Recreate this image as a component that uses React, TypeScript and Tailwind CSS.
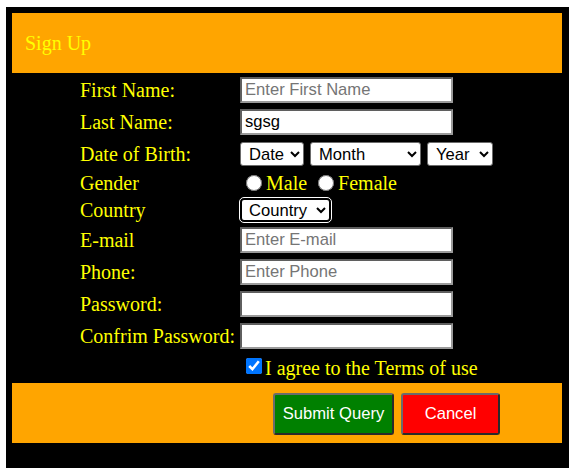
import { useState } from "react";

const serif = "font-['Liberation_Serif','Times_New_Roman',serif]";
const sans = "font-['Liberation_Sans',Arial,sans-serif]";

const inputCls = `w-[213px] h-[26px] bg-white text-black text-[16.6px] ${sans} px-[3px] border-2 border-t-[#5f5f5f] border-l-[#5f5f5f] border-b-[#9a9a9a] border-r-[#9a9a9a] placeholder:text-[#757575] outline-none`;
const selectCls = `h-[24px] bg-white text-black text-[16.6px] ${sans} border border-[#6b6b6b] rounded-[3px] pl-[4px] outline-none`;
const btnCls = `h-[42px] text-white text-[16.6px] ${sans} border-2 border-t-[#6b6b6b] border-l-[#6b6b6b] border-b-[#2a2a2a] border-r-[#2a2a2a] rounded-[3px]`;

function Row({ label, h = "h-[32px]", children }: { label: string; h?: string; children: React.ReactNode }) {
  return (
    <div className={`flex items-center ${h}`}>
      <div className="w-[160px] shrink-0 pl-[68px] box-content">
        <span className="whitespace-nowrap">{label}</span>
      </div>
      <div className="flex items-center">{children}</div>
    </div>
  );
}

export default function App() {
  const [last, setLast] = useState("sgsg");
  const [agree, setAgree] = useState(true);

  return (
    <div className="min-h-screen bg-white pl-[6px] pt-[7px]">
      <div className={`w-[563px] min-h-[470px] bg-black pt-[6px] pl-[6px] pr-[7px] text-[20px] text-[#ffff00] ${serif}`}>
        {/* Header */}
        <div className="h-[60px] bg-[#ffa500] flex items-center pl-[13px]">
          <span>Sign Up</span>
        </div>

        {/* Form rows */}
        <div className="pt-[1px]">
          <Row label="First Name:">
            <input className={inputCls} placeholder="Enter First Name" />
          </Row>
          <Row label="Last Name:">
            <input className={inputCls} value={last} onChange={(e) => setLast(e.target.value)} />
          </Row>
          <Row label="Date of Birth:">
            <div className="flex items-center gap-[6px]">
              <select className={`${selectCls} w-[64px]`} defaultValue="">
                <option value="">Date</option>
              </select>
              <select className={`${selectCls} w-[111px]`} defaultValue="">
                <option value="">Month</option>
                <option>September</option>
              </select>
              <select className={`${selectCls} w-[66px]`} defaultValue="">
                <option value="">Year</option>
              </select>
            </div>
          </Row>
          <Row label="Gender" h="h-[26px]">
            <label className="flex items-center">
              <input type="radio" name="g" className="w-4 h-4 ml-[6px] mr-[4px] accent-[#0075ff]" />
              <span>Male</span>
            </label>
            <label className="flex items-center ml-[5px]">
              <input type="radio" name="g" className="w-4 h-4 ml-[6px] mr-[4px] accent-[#0075ff]" />
              <span>Female</span>
            </label>
          </Row>
          <Row label="Country" h="h-[28px]">
            <select
              className={`h-[24px] w-[91px] bg-white text-black text-[16.6px] ${sans} border-2 border-black rounded-[4px] pl-[3px] outline outline-1 outline-white`}
              defaultValue=""
            >
              <option value="">Country</option>
            </select>
          </Row>
          <Row label="E-mail">
            <input className={inputCls} placeholder="Enter E-mail" />
          </Row>
          <Row label="Phone:">
            <input className={inputCls} placeholder="Enter Phone" />
          </Row>
          <Row label="Password:">
            <input type="password" className={inputCls} />
          </Row>
          <Row label="Confrim Password:">
            <input type="password" className={inputCls} />
          </Row>
          <div className="h-[31px] flex items-center pl-[228px]">
            <input
              type="checkbox"
              checked={agree}
              onChange={(e) => setAgree(e.target.checked)}
              className="w-4 h-4 ml-[6px] mr-[3px] -mt-[4px] accent-[#0075ff]"
            />
            <span>I agree to the Terms of use</span>
          </div>
        </div>

        {/* Footer */}
        <div className="h-[60px] bg-[#ffa500] pt-[10px] pl-[261px] flex gap-[7px]">
          <button className={`${btnCls} w-[121px] bg-[#008000]`}>Submit Query</button>
          <button className={`${btnCls} w-[99px] bg-[#ff0000]`}>Cancel</button>
        </div>
      </div>
    </div>
  );
}
